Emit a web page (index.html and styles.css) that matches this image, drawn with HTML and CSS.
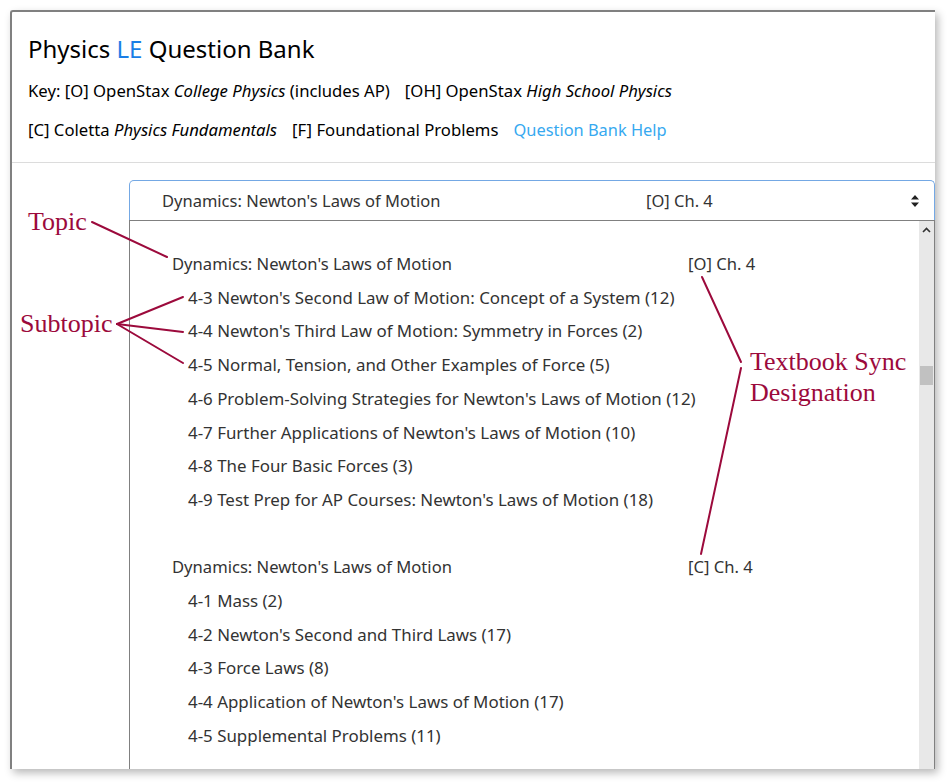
FILE: index.html
```html
<!DOCTYPE html>
<html lang="en">
<head>
<meta charset="utf-8">
<title>Physics LE Question Bank</title>
<link rel="stylesheet" href="styles.css">
</head>
<body>
<div class="window">
  <header class="head">
    <h1 class="title">Physics <span class="le">LE</span> Question Bank</h1>
    <div class="key">
      <span>Key: [O] OpenStax <i>College Physics</i> (includes AP)</span>
      <span>[OH] OpenStax <i>High School Physics</i></span>
    </div>
    <div class="key">
      <span>[C] Coletta <i>Physics Fundamentals</i></span>
      <span>[F] Foundational Problems</span>
      <a class="help" href="#">Question Bank Help</a>
    </div>
  </header>
  <div class="main">
    <div class="picker">
      <div class="select">
        <span class="sel-name">Dynamics: Newton's Laws of Motion</span>
        <span class="sel-ch">[O] Ch. 4</span>
        <svg class="sel-arrow" width="8" height="12" viewBox="0 0 8 12"><path d="M4 0 L8 4.5 H0 Z M0 7.5 H8 L4 12 Z" fill="#222"/></svg>
      </div>
      <div class="list">
        <div class="list-body">
          <div class="topic"><span class="t-name">Dynamics: Newton's Laws of Motion</span><span>[O] Ch. 4</span></div>
          <div class="sub">4-3 Newton's Second Law of Motion: Concept of a System (12)</div>
          <div class="sub">4-4 Newton's Third Law of Motion: Symmetry in Forces (2)</div>
          <div class="sub">4-5 Normal, Tension, and Other Examples of Force (5)</div>
          <div class="sub">4-6 Problem-Solving Strategies for Newton's Laws of Motion (12)</div>
          <div class="sub">4-7 Further Applications of Newton's Laws of Motion (10)</div>
          <div class="sub">4-8 The Four Basic Forces (3)</div>
          <div class="sub">4-9 Test Prep for AP Courses: Newton's Laws of Motion (18)</div>
          <div class="blank"></div>
          <div class="topic"><span class="t-name">Dynamics: Newton's Laws of Motion</span><span>[C] Ch. 4</span></div>
          <div class="sub">4-1 Mass (2)</div>
          <div class="sub">4-2 Newton's Second and Third Laws (17)</div>
          <div class="sub">4-3 Force Laws (8)</div>
          <div class="sub">4-4 Application of Newton's Laws of Motion (17)</div>
          <div class="sub">4-5 Supplemental Problems (11)</div>
        </div>
        <div class="scrollbar">
          <svg class="sb-up" width="9" height="6" viewBox="0 0 9 6"><path d="M1 5 L4.5 1.5 L8 5" fill="none" stroke="#333" stroke-width="1.6"/></svg>
          <div class="sb-thumb"></div>
        </div>
      </div>
    </div>
  </div>
</div>
<svg class="notes" width="950" height="782" viewBox="0 0 950 782">
  <g stroke="#9c0a3c" stroke-width="2" fill="none" stroke-linecap="round">
    <path d="M92 222 L167 257"/>
    <path d="M117 324 L183 297"/>
    <path d="M117 324 L183 332"/>
    <path d="M117 324 L183 363"/>
    <path d="M702 277 L741 362"/>
    <path d="M741 368 L701 554"/>
  </g>
  <g fill="#9c0a3c" font-family="'Liberation Serif', serif" font-size="26">
    <text x="28" y="230">Topic</text>
    <text x="20" y="332">Subtopic</text>
    <text x="750" y="370">Textbook Sync</text>
    <text x="750" y="401">Designation</text>
  </g>
</svg>
</body>
</html>
```
FILE: styles.css
```css
html, body {
  margin: 0;
  padding: 0;
  background: #fff;
}
body {
  width: 950px;
  height: 782px;
  position: relative;
  overflow: hidden;
  font-family: "Noto Sans", "Open Sans", sans-serif;
}
.window {
  position: absolute;
  left: 10px;
  top: 10px;
  width: 923px;
  height: 757px;
  border-left: 2px solid #808080;
  border-top: 2px solid #808080;
  border-top-left-radius: 3px;
  background: #fff;
  box-shadow: 3px 4px 8px rgba(0, 0, 0, 0.28);
  display: flex;
  flex-direction: column;
  overflow: hidden;
}
.head {
  padding: 20px 0 0 16px;
  height: 130px;
  border-bottom: 1px solid #dcdcdc;
  color: #000;
}
.title {
  margin: 0 0 5px;
  font-size: 24px;
  font-weight: 400;
  line-height: 34px;
}
.le {
  color: #1a7ee6;
}
.key {
  display: flex;
  gap: 15px;
  font-size: 16.7px;
  line-height: 39px;
}
.help {
  color: #36a9f0;
  text-decoration: none;
  margin-left: 0;
  font-size: 16.4px;
}
.main {
  flex: 1;
  padding: 17px 0 0 117px;
  display: flex;
  min-height: 0;
}
.picker {
  flex: 1;
  display: flex;
  flex-direction: column;
  min-height: 0;
}
.select {
  height: 40px;
  box-sizing: border-box;
  border: 1px solid #74a8e4;
  border-bottom: none;
  border-radius: 5px 5px 0 0;
  display: flex;
  align-items: center;
  padding-left: 32px;
  font-size: 16.5px;
  color: #333;
  position: relative;
}
.sel-name {
  width: 484px;
}
.sel-arrow {
  position: absolute;
  right: 15px;
  top: 14px;
}
.list {
  flex: 1;
  display: flex;
  border-left: 1px solid #808080;
  border-top: 1px solid #808080;
  border-right: 1px solid #808080;
  min-height: 0;
}
.list-body {
  flex: 1;
  padding: 26px 0 0 42px;
  font-size: 16.9px;
  color: #333;
  line-height: 33.7px;
}
.topic {
  display: flex;
  font-size: 16.6px;
}
.t-name {
  width: 516px;
}
.sub {
  padding-left: 16px;
}
.blank {
  height: 33.7px;
}
.scrollbar {
  width: 15px;
  background: #e8e8e8;
  position: relative;
}
.sb-up {
  position: absolute;
  left: 3px;
  top: 6px;
}
.sb-thumb {
  position: absolute;
  left: 1px;
  right: 1px;
  top: 145px;
  height: 19px;
  background: #c1c1c1;
}
.notes {
  position: absolute;
  left: 0;
  top: 0;
  pointer-events: none;
}
```
